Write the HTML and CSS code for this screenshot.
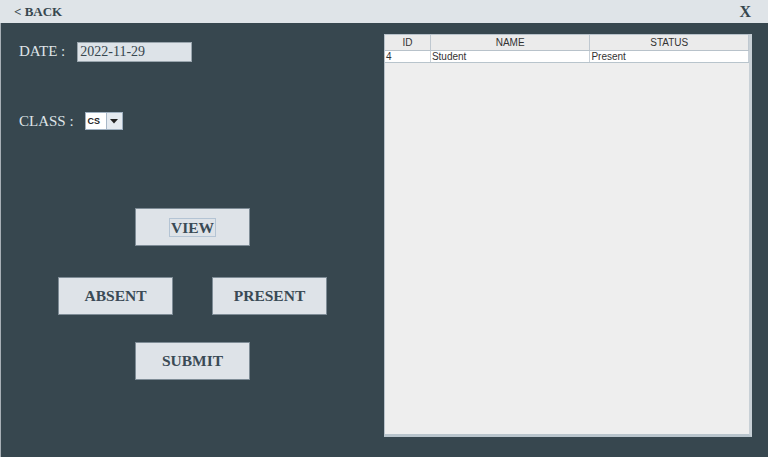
FILE: index.html
```html
<!DOCTYPE html>
<html>
<head>
<meta charset="utf-8">
<link rel="stylesheet" href="styles.css">
</head>
<body>
<div class="topbar">
  <span class="back">&lt; BACK</span>
  <span class="close">X</span>
</div>
<div class="main">
  <div class="left">
    <div class="row date-row">
      <span class="label">DATE :</span>
      <div class="field">2022-11-29</div>
    </div>
    <div class="row class-row">
      <span class="label">CLASS :</span>
      <div class="combo"><span class="combo-val">CS</span><span class="combo-btn"><svg width="8" height="5" viewBox="0 0 8 5"><path d="M0 0H8L4 4.5Z" fill="#222"/></svg></span></div>
    </div>
    <div class="btn-row r1"><div class="btn view"><span class="focus">VIEW</span></div></div>
    <div class="btn-row r2"><div class="btn">ABSENT</div><div class="btn">PRESENT</div></div>
    <div class="btn-row r3"><div class="btn">SUBMIT</div></div>
  </div>
  <div class="table-panel">
    <div class="thead">
      <div class="c c1">ID</div><div class="c c2">NAME</div><div class="c c3">STATUS</div>
    </div>
    <div class="trow">
      <div class="c c1">4</div><div class="c c2">Student</div><div class="c c3">Present</div>
    </div>
  </div>
</div>
</body>
</html>
```
FILE: styles.css
```css
* { box-sizing: border-box; }
html, body { margin: 0; padding: 0; }
body { width: 768px; height: 457px; overflow: hidden; background: #37474f; font-family: "Liberation Serif", serif; }
.topbar { height: 23px; background: #dfe4e8; display: flex; justify-content: space-between; align-items: center; padding: 0 17px 0 14px; }
.back { font-weight: bold; font-size: 13px; color: #37474f; }
.close { font-weight: bold; font-size: 16px; color: #37474f; }
.main { display: flex; height: 434px; border-left: 1px solid #a8b0b6; }
.left { width: 383px; display: flex; flex-direction: column; }
.row { display: flex; align-items: center; padding-left: 18px; }
.label { color: #dfe4e8; font-size: 15px; }
.date-row { margin-top: 19px; height: 19px; }
.field { margin-left: 12px; width: 115px; height: 20px; background: #dde3e8; border: 1px solid #9aa6ae; font-size: 14px; color: #37474f; padding-left: 2px; line-height: 18px; }
.class-row { margin-top: 51px; height: 18px; }
.combo { margin-left: 11px; width: 38px; height: 18px; display: flex; border: 1px solid #9fb0c0; background: #fff; }
.combo-val { flex: 1; font-family: "Liberation Sans", sans-serif; font-weight: bold; font-size: 9px; color: #222; line-height: 16px; padding-left: 2px; }
.combo-btn { width: 16px; background: #e4eaf0; border-left: 1px solid #a8b8c8; display: flex; align-items: center; justify-content: center; }
.btn-row { display: flex; }
.r1 { margin-top: 78px; padding-left: 134px; }
.r2 { margin-top: 31px; padding-left: 57px; gap: 39px; }
.r3 { margin-top: 27px; padding-left: 134px; }
.btn { width: 115px; height: 38px; background: #dee3e8; border: 1px solid #7e8c96; display: flex; align-items: center; justify-content: center; font-weight: bold; font-size: 15.5px; color: #3a4a55; }
.focus { border: 1px solid #b4c4d4; padding: 0 1px; line-height: 17px; }
.table-panel { margin-top: 11px; width: 368px; height: 403px; background: #eeeeee; border: 1px solid #b8c2ca; border-right: 3px solid #c8d0d6; border-bottom: 3px solid #b8c4cc; font-family: "Liberation Sans", sans-serif; font-size: 10px; color: #333; }
.thead, .trow { display: flex; }
.thead { height: 16px; background: #ebebeb; border-bottom: 1px solid #b8c2ca; }
.thead .c { text-align: center; line-height: 15px; border-right: 1px solid #bfc8d0; }
.trow { height: 12px; background: #fff; border-bottom: 1px solid #b8c4cc; }
.trow .c { line-height: 11px; padding-left: 1px; border-right: 1px solid #c8d0d8; }
.c1 { width: 46px; }
.c2 { width: 160px; }
.c3 { width: 159px; }
```
